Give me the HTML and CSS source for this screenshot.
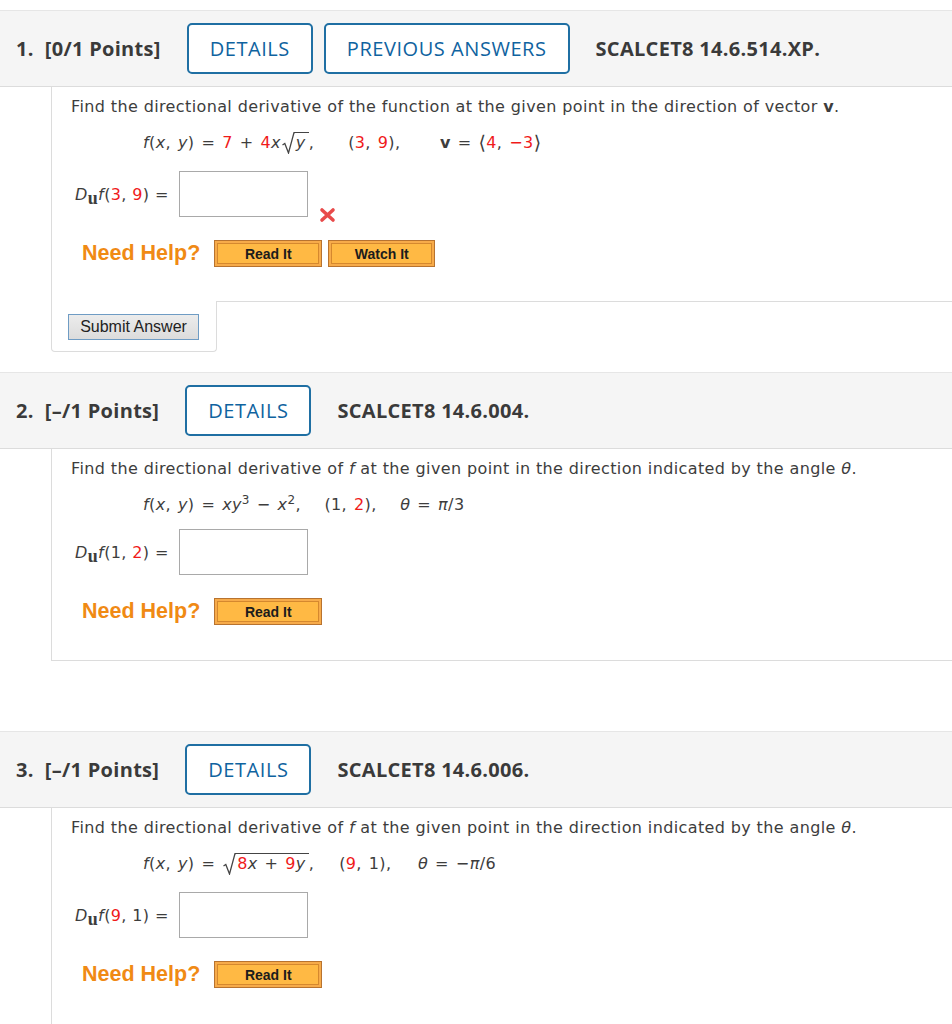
FILE: index.html
```html
<!DOCTYPE html>
<html>
<head>
<meta charset="utf-8">
<link rel="stylesheet" href="styles.css">
</head>
<body>

<div class="qhead">
  <span class="qlabel">1.&nbsp; [0/1 Points]</span>
  <button class="qbtn">DETAILS</button>
  <button class="qbtn">PREVIOUS ANSWERS</button>
  <span class="qtitle">SCALCET8 14.6.514.XP.</span>
</div>
<div class="qwrap">
  <div class="qbody q-open">
    <p class="intro">Find the directional derivative of the function at the given point in the direction of vector <b>v</b>.</p>
    <div class="math"><span class="piece"><i>f</i>(<i>x</i>, <i>y</i>) = <span class="red">7</span> + <span class="red">4</span><i>x</i><span class="sqrt"><svg class="radsign" width="13" height="22" viewBox="0 0 13 22"><path d="M0.5 13 L2.8 11.5 L6.5 21 L12 0.7 L13 0.7" fill="none" stroke="#444" stroke-width="1.3"/></svg><span class="rad"><i>y</i></span></span>,</span><span class="piece gap-a">(<span class="red">3</span>, <span class="red">9</span>),</span><span class="piece gap-b"><b>v</b> = <span class="ang">⟨</span><span class="red">4</span>, <span class="red">−3</span><span class="ang">⟩</span></span></div>
    <div class="answer tall">
      <span class="du"><i>D</i><sub>u</sub><i>f</i>(<span class="red">3</span>, <span class="red">9</span>) =</span>
      <span class="box"></span>
      <svg class="wrong" width="17" height="16" viewBox="0 0 17 16"><path d="M3 3 L14 13 M14 3 L3 13" stroke="#e84a4a" stroke-width="3.6" stroke-linecap="round"/></svg>
    </div>
    <div class="help">
      <span class="needhelp">Need Help?</span>
      <span class="hbtn"><span>Read It</span></span>
      <span class="hbtn watch"><span>Watch It</span></span>
    </div>
  </div>
  <div class="qfoot">
    <div class="submit-cell"><button class="submit">Submit Answer</button></div>
    <div class="filler"></div>
  </div>
</div>

<div class="qhead">
  <span class="qlabel">2.&nbsp; [–/1 Points]</span>
  <button class="qbtn">DETAILS</button>
  <span class="qtitle">SCALCET8 14.6.004.</span>
</div>
<div class="qwrap">
  <div class="qbody q-closed">
    <p class="intro">Find the directional derivative of <i>f</i> at the given point in the direction indicated by the angle <i class="th">θ</i>.</p>
    <div class="math"><span class="piece"><i>f</i>(<i>x</i>, <i>y</i>) = <i>xy</i><sup>3</sup> − <i>x</i><sup>2</sup>,</span><span class="piece gap-c">(1, <span class="red">2</span>),</span><span class="piece gap-d"><i class="th">θ</i> = <i>π</i>/3</span></div>
    <div class="answer">
      <span class="du"><i>D</i><sub>u</sub><i>f</i>(1, <span class="red">2</span>) =</span>
      <span class="box"></span>
    </div>
    <div class="help">
      <span class="needhelp">Need Help?</span>
      <span class="hbtn"><span>Read It</span></span>
    </div>
  </div>
</div>

<div class="qhead q3">
  <span class="qlabel">3.&nbsp; [–/1 Points]</span>
  <button class="qbtn">DETAILS</button>
  <span class="qtitle">SCALCET8 14.6.006.</span>
</div>
<div class="qwrap">
  <div class="qbody q-last">
    <p class="intro">Find the directional derivative of <i>f</i> at the given point in the direction indicated by the angle <i class="th">θ</i>.</p>
    <div class="math"><span class="piece"><i>f</i>(<i>x</i>, <i>y</i>) = <span class="sqrt"><svg class="radsign" width="13" height="22" viewBox="0 0 13 22"><path d="M0.5 13 L2.8 11.5 L6.5 21 L12 0.7 L13 0.7" fill="none" stroke="#444" stroke-width="1.3"/></svg><span class="rad"><span class="red">8</span><i>x</i> + <span class="red">9</span><i>y</i></span></span>,</span><span class="piece gap-e">(<span class="red">9</span>, 1),</span><span class="piece gap-f"><i class="th">θ</i> = −<i>π</i>/6</span></div>
    <div class="answer tall">
      <span class="du"><i>D</i><sub>u</sub><i>f</i>(<span class="red">9</span>, 1) =</span>
      <span class="box"></span>
    </div>
    <div class="help">
      <span class="needhelp">Need Help?</span>
      <span class="hbtn"><span>Read It</span></span>
    </div>
  </div>
</div>

</body>
</html>
```

FILE: styles.css
```css
html, body {
  margin: 0;
  padding: 0;
  background: #fff;
}
body {
  padding-top: 10px;
  font-family: "DejaVu Sans", Verdana, sans-serif;
  color: #3d3d3d;
}

.qhead {
  display: flex;
  align-items: center;
  height: 77px;
  box-sizing: border-box;
  padding-left: 16px;
  background: #f5f5f5;
  border-top: 1px solid #e6e6e6;
  border-bottom: 1px solid #dcdcdc;
  font-family: "Open Sans", "Noto Sans", sans-serif;
}
.qlabel {
  font-size: 20px;
  font-weight: 700;
  letter-spacing: 0.3px;
  color: #3a3a3a;
  margin-right: 26px;
  white-space: pre;
}
.qbtn {
  height: 51px;
  box-sizing: border-box;
  padding: 0 21px;
  margin-right: 11px;
  background: #fff;
  border: 2px solid #1f6fa3;
  border-radius: 5px;
  font-family: "Open Sans", "Noto Sans", sans-serif;
  font-size: 20px;
  font-weight: 500;
  letter-spacing: 0.55px;
  color: #0f63a0;
}
.qtitle {
  margin-left: 15px;
  font-size: 20px;
  font-weight: 700;
  letter-spacing: 0.3px;
  color: #3a3a3a;
}
.q3 {
  margin-top: 70px;
}

.qwrap {
  margin-left: 51px;
}
.qbody {
  border-left: 1px solid #dcdcdc;
  padding: 10px 0 34px 19px;
}
.q-closed {
  border-bottom: 1px solid #dcdcdc;
  padding-bottom: 35px;
}
.q-last {
  min-height: 300px;
}

.intro {
  margin: 0;
  font-size: 16px;
  line-height: 20px;
  letter-spacing: 0.38px;
  white-space: nowrap;
}
.red {
  color: #f01a1a;
}
.math {
  margin-top: 14px;
  height: 24px;
  line-height: 24px;
  padding-left: 72px;
  font-size: 16px;
  letter-spacing: 0.38px;
  word-spacing: 1.5px;
  white-space: nowrap;
}
.math i, .du i, .intro i {
  font-style: oblique;
}
.math sup {
  font-size: 12px;
  line-height: 0;
  vertical-align: 6px;
}
.ang {
  font-size: 19px;
  line-height: 0;
  vertical-align: -1px;
}
.piece {
  display: inline-block;
  white-space: pre;
}
.gap-a { margin-left: 34px; }
.gap-b { margin-left: 39.5px; }
.gap-c { margin-left: 23.5px; }
.gap-d { margin-left: 23.5px; }
.gap-e { margin-left: 25px; }
.gap-f { margin-left: 26.5px; }

.sqrt {
  display: inline-flex;
  align-items: flex-start;
  vertical-align: -6px;
  margin-left: 1px;
  height: 22px;
  line-height: 20px;
}
.radsign {
  display: block;
}
.rad {
  border-top: 1.3px solid #444;
  padding: 0 3px 0 1px;
  white-space: pre;
}

.answer {
  display: flex;
  align-items: center;
  margin-top: 12px;
  padding-left: 4px;
  height: 46px;
}
.answer.tall {
  margin-top: 16px;
}
.du {
  font-size: 16px;
  letter-spacing: 0.38px;
  white-space: pre;
  margin-right: 10px;
}
.du sub {
  font-family: "Liberation Serif", serif;
  font-weight: bold;
  font-size: 18px;
  line-height: 0;
  vertical-align: -4px;
}
.box {
  display: block;
  width: 129px;
  height: 46px;
  box-sizing: border-box;
  border: 1px solid #a9a9a9;
  background: #fff;
}
.wrong {
  align-self: flex-end;
  margin-left: 11px;
  margin-bottom: -6px;
}

.help {
  display: flex;
  align-items: center;
  margin-top: 23px;
  padding-left: 11px;
  height: 27px;
}
.needhelp {
  font-family: "Liberation Sans", Arial, sans-serif;
  font-weight: bold;
  font-size: 21.5px;
  color: #f08a14;
  margin-right: 14px;
}
.hbtn {
  display: block;
  width: 108px;
  height: 27px;
  box-sizing: border-box;
  border: 1px solid #b8732f;
  background: #f7ab4a;
  padding: 2px;
}
.hbtn span {
  display: flex;
  align-items: center;
  justify-content: center;
  height: 100%;
  box-sizing: border-box;
  border: 1px solid #d5882e;
  background: #ffb944;
  font-family: "Liberation Sans", Arial, sans-serif;
  font-weight: bold;
  font-size: 14px;
  color: #1c1c1c;
}
.hbtn.watch {
  width: 107px;
  margin-left: 6px;
}

.qfoot {
  display: flex;
  margin-bottom: 20px;
}
.submit-cell {
  width: 166px;
  height: 51px;
  box-sizing: border-box;
  border: 1px solid #dcdcdc;
  border-top: none;
  border-radius: 0 0 4px 4px;
  padding: 13px 0 0 16px;
}
.submit {
  width: 131px;
  height: 26px;
  box-sizing: border-box;
  border: 1px solid #6f9cc4;
  background: linear-gradient(#ececec, #dcdcdc);
  font-family: "Liberation Sans", Arial, sans-serif;
  font-size: 16px;
  color: #222;
  padding: 0;
}
.filler {
  flex: 1;
  border-top: 1px solid #dcdcdc;
}
```
